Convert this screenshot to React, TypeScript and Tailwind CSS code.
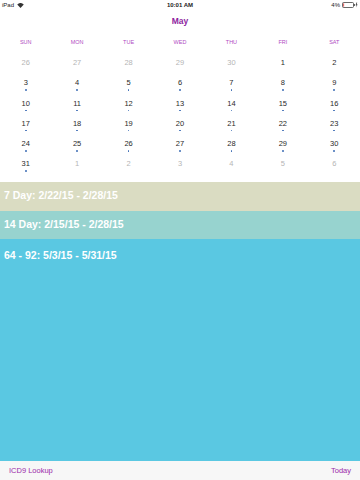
import React from "react";

const font = { fontFamily: '"Liberation Sans", Arial, sans-serif' };

type Cell = { d: number; muted?: boolean; dot?: boolean };

const rows: Cell[][] = [
  [26, 27, 28, 29, 30].map((d) => ({ d, muted: true })).concat([{ d: 1 }, { d: 2 }]),
  [3, 4, 5, 6, 7, 8, 9].map((d) => ({ d, dot: true })),
  [10, 11, 12, 13, 14, 15, 16].map((d) => ({ d, dot: true })),
  [17, 18, 19, 20, 21, 22, 23].map((d) => ({ d, dot: true })),
  [24, 25, 26, 27, 28, 29, 30].map((d) => ({ d, dot: true })),
  [{ d: 31, dot: true }].concat([1, 2, 3, 4, 5, 6].map((d) => ({ d, muted: true, dot: false }))),
];

const days = ["SUN", "MON", "TUE", "WED", "THU", "FRI", "SAT"];

export default function App() {
  return (
    <div className="w-[360px] h-[480px] flex flex-col bg-white overflow-hidden" style={font}>
      {/* status bar */}
      <div className="h-[10px] flex items-center justify-between px-[2px] text-[6px] text-[#222] relative">
        <div className="flex items-center gap-[3px]">
          <span>iPad</span>
          <svg width="7" height="5" viewBox="0 0 14 10">
            <path d="M7 10 L0.5 3 A9.5 9.5 0 0 1 13.5 3 Z" fill="#333" />
          </svg>
        </div>
        <span className="absolute left-1/2 -translate-x-1/2 font-bold">10:01 AM</span>
        <div className="flex items-center gap-[2px]">
          <span>4%</span>
          <svg width="16" height="6" viewBox="0 0 16 6">
            <rect x="0.5" y="0.5" width="11" height="5" rx="1" fill="none" stroke="#444" strokeWidth="0.8" />
            <rect x="1.3" y="1.3" width="0.8" height="3.4" fill="#d33" />
            <rect x="11.8" y="2" width="1" height="2" fill="#444" />
            <path d="M14.5 0.5 L13.6 3.2 L14.6 3.2 L14 5.5 L15.6 2.4 L14.6 2.4 L15.2 0.5 Z" fill="#333" />
          </svg>
        </div>
      </div>

      {/* title */}
      <div className="h-[22px] flex items-center justify-center text-[8.5px] font-bold text-[#8e1f9f]">May</div>

      {/* weekday header */}
      <div className="grid grid-cols-7 h-[21px] items-center text-[5.5px] text-[#b14bc3]">
        {days.map((d) => (
          <div key={d} className="text-center">{d}</div>
        ))}
      </div>

      {/* dates */}
      <div className="flex flex-col mb-[7px]">
        {rows.map((r, i) => (
          <div key={i} className="grid grid-cols-7 h-[20.3px]">
            {r.map((c, j) => (
              <div key={j} className="flex flex-col items-center pt-[6px]">
                <span className={`text-[7.5px] leading-[8px] ${c.muted ? "text-[#b5b5b5]" : "text-[#2a2a2a]"}`}>{c.d}</span>
                {c.dot ? <span className="w-[1.6px] h-[1.6px] mt-[2px] rounded-full bg-[#3d6db5]" /> : null}
              </div>
            ))}
          </div>
        ))}
      </div>

      {/* bands */}
      <div className="h-[29px] bg-[#dadcc2] flex items-center px-[4px] text-white text-[10.5px] font-bold">7 Day: 2/22/15 - 2/28/15</div>
      <div className="h-[28px] bg-[#97d3cf] flex items-center px-[4px] text-white text-[10.5px] font-bold">14 Day: 2/15/15 - 2/28/15</div>
      <div className="flex-1 bg-[#5ac8e2] px-[4px] pt-[9px] text-white text-[10.5px] font-bold">64 - 92: 5/3/15 - 5/31/15</div>

      {/* bottom bar */}
      <div className="h-[19px] bg-[#f7f7f7] flex items-center justify-between px-[9px] text-[7.5px] text-[#9b2aaa]">
        <span>ICD9 Lookup</span>
        <span>Today</span>
      </div>
    </div>
  );
}
